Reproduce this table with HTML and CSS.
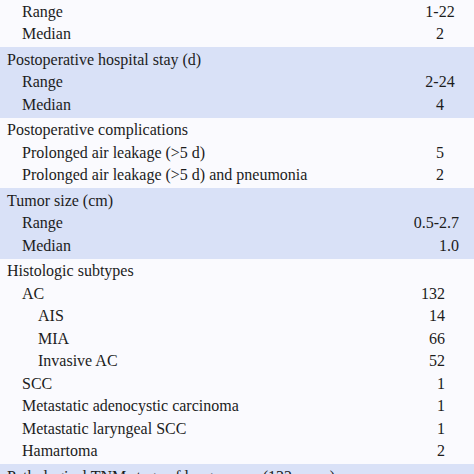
FILE: index.html
```html
<!DOCTYPE html>
<html>
<head>
<meta charset="utf-8">
<link rel="stylesheet" href="styles.css">
</head>
<body>
<div class="table">
  <div class="group light first">
    <div class="row"><span class="label l1">Range</span><span class="val">1-22</span></div>
    <div class="row"><span class="label l1">Median</span><span class="val">2</span></div>
  </div>
  <div class="group blue">
    <div class="row"><span class="label">Postoperative hospital stay (d)</span><span class="val"></span></div>
    <div class="row"><span class="label l1">Range</span><span class="val">2-24</span></div>
    <div class="row"><span class="label l1">Median</span><span class="val">4</span></div>
  </div>
  <div class="group light">
    <div class="row"><span class="label">Postoperative complications</span><span class="val"></span></div>
    <div class="row"><span class="label l1">Prolonged air leakage (&gt;5 d)</span><span class="val">5</span></div>
    <div class="row"><span class="label l1">Prolonged air leakage (&gt;5 d) and pneumonia</span><span class="val">2</span></div>
  </div>
  <div class="group blue">
    <div class="row"><span class="label">Tumor size (cm)</span><span class="val"></span></div>
    <div class="row"><span class="label l1">Range</span><span class="val far">0.5-2.7</span></div>
    <div class="row"><span class="label l1">Median</span><span class="val far">1.0</span></div>
  </div>
  <div class="group light">
    <div class="row"><span class="label">Histologic subtypes</span><span class="val"></span></div>
    <div class="row"><span class="label l1">AC</span><span class="val near">132</span></div>
    <div class="row"><span class="label l2">AIS</span><span class="val near">14</span></div>
    <div class="row"><span class="label l2">MIA</span><span class="val near">66</span></div>
    <div class="row"><span class="label l2">Invasive AC</span><span class="val near">52</span></div>
    <div class="row"><span class="label l1">SCC</span><span class="val near">1</span></div>
    <div class="row"><span class="label l1">Metastatic adenocystic carcinoma</span><span class="val near">1</span></div>
    <div class="row"><span class="label l1">Metastatic laryngeal SCC</span><span class="val near">1</span></div>
    <div class="row"><span class="label l1">Hamartoma</span><span class="val near">2</span></div>
  </div>
  <div class="group blue">
    <div class="row"><span class="label">Pathological TNM stage of lung cancer (132 cases)</span><span class="val"></span></div>
  </div>
</div>
</body>
</html>
```
FILE: styles.css
```css
html, body {
  margin: 0;
  padding: 0;
  background: #fafafe;
}
body {
  font-family: "Liberation Serif", "Times New Roman", serif;
  font-size: 16px;
  color: #1c1c1c;
  overflow: hidden;
}
.table {
  width: 474px;
  display: flex;
  flex-direction: column;
}
.group {
  padding: 1.5px 0;
  display: flex;
  flex-direction: column;
}
.group.first {
  padding-top: 0.5px;
}
.light {
  background: #fafafe;
}
.blue {
  background: #d9e1f7;
}
.row {
  display: flex;
  align-items: baseline;
  height: 22.5px;
  line-height: 22.5px;
}
.label {
  flex: 1;
  padding-left: 7px;
  white-space: nowrap;
}
.label.l1 {
  padding-left: 22px;
}
.label.l2 {
  padding-left: 38px;
}
.val {
  width: 50px;
  margin-right: 9px;
  text-align: center;
  white-space: nowrap;
}
.val.far {
  text-align: right;
  margin-right: 15px;
  width: 60px;
}
.val.near {
  text-align: right;
  margin-right: 29px;
}
```
